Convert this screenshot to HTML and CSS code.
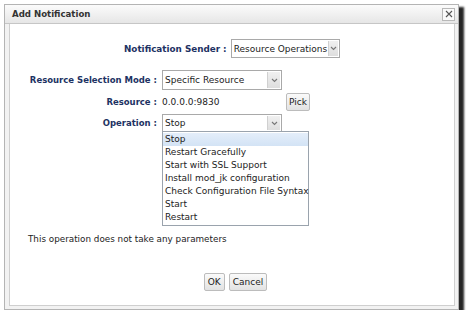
FILE: index.html
```html
<!DOCTYPE html>
<html>
<head>
<meta charset="utf-8">
<link rel="stylesheet" href="styles.css">
</head>
<body>
<div class="dialog">
  <div class="titlebar">
    <span class="title">Add Notification</span>
    <span class="close"><svg width="8" height="8" viewBox="0 0 8 8"><path d="M1 1 L7 7 M7 1 L1 7" stroke="#555" stroke-width="1.1" fill="none"/></svg></span>
  </div>
  <div class="panel">
    <div class="sender-row">
      <span class="label sender-label">Notification Sender :</span>
      <span class="select sender-select"><span class="sel-text">Resource Operations</span><span class="arrow"><svg width="7" height="5" viewBox="0 0 7 5"><path d="M1 1 L3.5 3.5 L6 1" stroke="#777" stroke-width="1.1" fill="none"/></svg></span></span>
    </div>
    <div class="form">
      <span class="label">Resource Selection Mode :</span>
      <span class="select wide-select tall"><span class="sel-text">Specific Resource</span><span class="arrow"><svg width="7" height="5" viewBox="0 0 7 5"><path d="M1 1 L3.5 3.5 L6 1" stroke="#777" stroke-width="1.1" fill="none"/></svg></span></span>

      <span class="label">Resource :</span>
      <span class="value-row"><span class="value">0.0.0.0:9830</span><span class="btn pick">Pick</span></span>

      <span class="label">Operation :</span>
      <span class="select wide-select op-select"><span class="sel-text">Stop</span><span class="arrow"><svg width="7" height="5" viewBox="0 0 7 5"><path d="M1 1 L3.5 3.5 L6 1" stroke="#777" stroke-width="1.1" fill="none"/></svg></span>
        <span class="dropdown">
          <span class="opt active">Stop</span>
          <span class="opt">Restart Gracefully</span>
          <span class="opt">Start with SSL Support</span>
          <span class="opt">Install mod_jk configuration</span>
          <span class="opt">Check Configuration File Syntax</span>
          <span class="opt">Start</span>
          <span class="opt">Restart</span>
        </span>
      </span>
    </div>
    <div class="note">This operation does not take any parameters</div>
    <div class="buttons">
      <span class="btn">OK</span>
      <span class="btn">Cancel</span>
    </div>
  </div>
</div>
</body>
</html>
```
FILE: styles.css
```css
html, body {
  margin: 0;
  padding: 0;
  background: #ffffff;
}
body {
  font-family: "DejaVu Sans", sans-serif;
  font-size: 9px;
  color: #222;
}
.dialog {
  margin: 4px 0 0 4px;
  width: 455px;
  height: 306px;
  box-sizing: border-box;
  border: 1px solid #b4b4b4;
  background: #f2f2f2;
  box-shadow: 4px 4px 2px 1px #262626;
  display: flex;
  flex-direction: column;
}
.titlebar {
  height: 18px;
  display: flex;
  align-items: center;
  justify-content: space-between;
  padding: 0 3px 0 7px;
  background: linear-gradient(#fbfbfb, #e6e6e6);
  border-bottom: 1px solid #c6c6c6;
}
.title {
  font-weight: bold;
  font-size: 8.6px;
  color: #333;
  margin-top: -1px;
}
.close {
  width: 11px;
  height: 11px;
  border: 1px solid #b8b8b8;
  background: #fafafa;
  display: flex;
  align-items: center;
  justify-content: center;
}
.panel {
  flex: 1;
  margin: 0 3px 3px 4px;
  background: #fff;
  border: 1px solid #cfcfcf;
  border-top: none;
  position: relative;
}
.label {
  font-weight: bold;
  font-size: 8.5px;
  color: #1d3263;
  text-align: right;
  white-space: nowrap;
}
.sender-label {
  font-size: 8.8px;
}
.sender-row {
  display: flex;
  align-items: center;
  gap: 4px;
  margin: 15px 0 0 114px;
}
.select {
  display: flex;
  align-items: center;
  box-sizing: border-box;
  border: 1px solid #a9a9a9;
  background: #fff;
  position: relative;
}
.sel-text {
  flex: 1;
  padding-left: 2px;
  white-space: nowrap;
}
.arrow {
  width: 12px;
  align-self: stretch;
  margin: 1px;
  background: linear-gradient(#f0f0f0, #dedede);
  border-left: 1px solid #d0d0d0;
  display: flex;
  align-items: center;
  justify-content: center;
}
.sender-select {
  width: 109px;
  height: 19px;
}
.form {
  display: grid;
  grid-template-columns: 147px 120px;
  column-gap: 5px;
  row-gap: 3px;
  align-items: center;
  margin-top: 12px;
}
.wide-select {
  width: 120px;
  height: 20px;
}
.op-select {
  height: 18px;
}
.value-row {
  display: flex;
  align-items: center;
  justify-content: space-between;
  width: 148px;
}
.btn {
  display: inline-flex;
  align-items: center;
  justify-content: center;
  height: 18px;
  box-sizing: border-box;
  padding: 0 3px;
  border: 1px solid #bcbcbc;
  border-radius: 2px;
  background: linear-gradient(#fafafa, #e2e2e2);
  color: #222;
}
.pick {
  width: 24px;
}
.dropdown {
  position: absolute;
  top: 100%;
  left: -1px;
  width: 147px;
  box-sizing: border-box;
  border: 1px solid #9aa3ad;
  background: #fff;
  display: flex;
  flex-direction: column;
  padding: 1px 0 1px 0;
  z-index: 2;
}
.opt {
  height: 13px;
  line-height: 13px;
  padding-left: 2px;
  white-space: nowrap;
}
.opt.active {
  background: linear-gradient(#e4eefa, #d3e3f5);
}
.note {
  margin: 102px 0 0 18px;
  font-size: 8.8px;
}
.buttons {
  display: flex;
  justify-content: center;
  gap: 4px;
  margin-top: 29px;
  padding-left: 7px;
}
```
